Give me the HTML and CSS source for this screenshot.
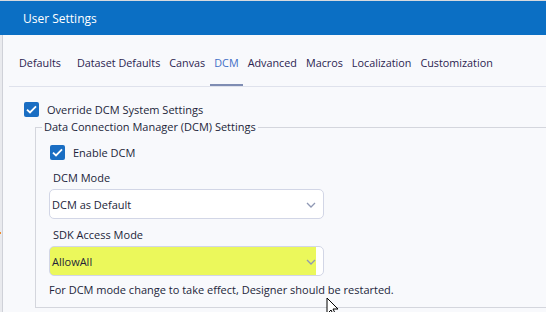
FILE: index.html
```html
<!DOCTYPE html>
<html lang="en">
<head>
    <meta charset="UTF-8">
    <title>User Settings</title>
    <link rel="stylesheet" href="styles.css">
</head>
<body>
    <div class="window">
        <div class="titlebar">User Settings</div>
        <div class="main">
            <div class="edge"><span class="edge-dot"></span></div>
            <div class="content">
                <div class="tabs">
                    <span class="tab first">Defaults</span>
                    <span class="tab">Dataset Defaults</span>
                    <span class="tab">Canvas</span>
                    <span class="tab active">DCM</span>
                    <span class="tab">Advanced</span>
                    <span class="tab">Macros</span>
                    <span class="tab">Localization</span>
                    <span class="tab">Customization</span>
                </div>

                <div class="panel">
                    <label class="check-row">
                        <span class="checkbox">
                            <svg width="11" height="9" viewBox="0 0 11 9"><path d="M1 4.6 L4 7.5 L10 1.3" fill="none" stroke="#fff" stroke-width="1.8"/></svg>
                        </span>
                        Override DCM System Settings
                    </label>

                    <fieldset class="group">
                        <legend>Data Connection Manager (DCM) Settings</legend>

                        <label class="check-row enable">
                            <span class="checkbox">
                                <svg width="11" height="9" viewBox="0 0 11 9"><path d="M1 4.6 L4 7.5 L10 1.3" fill="none" stroke="#fff" stroke-width="1.8"/></svg>
                            </span>
                            Enable DCM
                        </label>

                        <div class="field-label first">DCM Mode</div>
                        <div class="select">
                            <span>DCM as Default</span>
                            <svg class="chevron" width="10" height="6" viewBox="0 0 10 6"><path d="M1 1 L5 5 L9 1" fill="none" stroke="#8f98b4" stroke-width="1.3"/></svg>
                        </div>

                        <div class="field-label">SDK Access Mode</div>
                        <div class="select highlight">
                            <span>AllowAll</span>
                            <svg class="chevron" width="10" height="6" viewBox="0 0 10 6"><path d="M1 1 L5 5 L9 1" fill="none" stroke="#8f98b4" stroke-width="1.3"/></svg>
                        </div>

                        <p class="note">For DCM mode change to take effect, Designer should be restarted.</p>
                    </fieldset>
                </div>

                <!-- mouse pointer from the screenshot -->
                <svg class="cursor" width="13" height="20" viewBox="0 0 13 20">
                    <path d="M1 1 L1 17 L5 13 L8 19 L10 18 L7 12 L12 12 Z" fill="#fff" stroke="#000" stroke-width="1"/>
                </svg>
            </div>
        </div>
    </div>
</body>
</html>
```

FILE: styles.css
```css
body {
    margin: 0;
    font-family: "Open Sans", "Noto Sans", sans-serif;
    font-size: 11px;
    color: #231f3a;
    width: 546px;
    height: 312px;
    overflow: hidden;
    background: #f8f9fc;
}
.window {
    display: flex;
    flex-direction: column;
    height: 312px;
}
.titlebar {
    height: 34px;
    border-top: 1px solid #d6d9de;
    background: #0b6fc4;
    color: #ffffff;
    font-size: 12px;
    display: flex;
    align-items: center;
    padding-left: 23px;
}
.main {
    flex: 1;
    display: flex;
}
.edge {
    width: 2px;
    background: #e9eaee;
    border-right: 1px solid #cfd1d8;
    position: relative;
}
.edge-dot {
    position: absolute;
    left: 0;
    top: 197px;
    width: 1px;
    height: 2px;
    background: #f08a2a;
}
.content {
    flex: 1;
    position: relative;
    overflow: hidden;
    background: #f8f9fc;
}
.tabs {
    display: flex;
    align-items: center;
    height: 51px;
    margin-left: 6px;
    border-bottom: 1px solid #dfe2ec;
    padding-left: 5.5px;
    color: #2b2350;
    font-size: 10.8px;
}
.tab {
    height: 51px;
    line-height: 55px;
    padding: 0 4.5px;
    box-sizing: border-box;
}
.tab.first {
    margin-right: 7px;
}
.tab.active {
    color: #3f6ec6;
    border-bottom: 2px solid #7f8db3;
}
.panel {
    padding-left: 21px;
}
.check-row {
    display: flex;
    align-items: center;
    gap: 8px;
    height: 16px;
    margin-top: 14px;
}
.checkbox {
    width: 15px;
    height: 15px;
    background: #1a6ec3;
    border-radius: 2px;
    display: flex;
    align-items: center;
    justify-content: center;
}
.group {
    margin: 2px -40px 0 11px;
    padding: 0 0 9px 13px;
    border: 1px solid #d4d6dd;
    min-width: 0;
}
.group legend {
    line-height: 16px;
    padding: 0 2px;
    margin-left: -7px;
}
.check-row.enable {
    margin-top: 9px;
    margin-left: 1px;
}
.field-label {
    line-height: 16px;
    padding-left: 4px;
    margin-top: 8px;
    margin-bottom: 3px;
}
.field-label.first {
    margin-top: 10px;
}
.select {
    width: 275px;
    height: 30px;
    box-sizing: border-box;
    border: 1px solid #d2d6e6;
    border-radius: 5px;
    background: #ffffff;
    display: flex;
    align-items: center;
    justify-content: space-between;
    padding: 0 7px 0 2px;
}
.select.highlight {
    background: linear-gradient(to right, #ebf85b calc(100% - 7px), #ffffff 0);
}
.chevron {
    margin-top: 1px;
}
.note {
    margin: 6px 0 0 0;
    line-height: 16px;
}
.cursor {
    position: absolute;
    left: 323px;
    top: 262px;
}
```
